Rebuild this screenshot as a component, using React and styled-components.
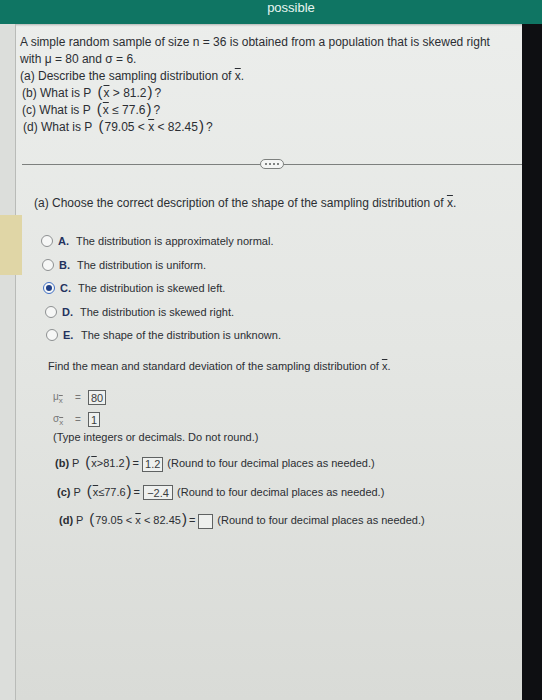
import React from "react";
import styled, { createGlobalStyle } from "styled-components";

const GlobalStyle = createGlobalStyle`
  html, body {
    margin: 0;
    padding: 0;
    background: #e2e4e1;
  }
  body {
    font-family: "Liberation Sans", Arial, sans-serif;
    color: #2b2e33;
  }
`;

const Screen = styled.div`
  width: 542px;
  height: 700px;
  display: flex;
  flex-direction: column;
  overflow: hidden;
  background: linear-gradient(180deg, #eceeec 0%, #e4e6e3 50%, #d9dbd7 100%);
`;

const Header = styled.div`
  height: 24px;
  flex-shrink: 0;
  background: #0f7563;
  display: flex;
  justify-content: center;
  overflow: hidden;
  box-shadow: 0 1px 2px rgba(0, 0, 0, 0.25);
`;

const HeaderText = styled.span`
  color: #e9f5f1;
  font-size: 13px;
  line-height: 16px;
  margin-left: 40px;
`;

const Body = styled.div`
  flex: 1;
  display: flex;
`;

const Rail = styled.div`
  width: 15px;
  flex-shrink: 0;
  border-right: 1px solid #b9bbb8;
  background: #dcdedb;
  padding-top: 191px;
`;

const Marker = styled.div`
  width: 22px;
  height: 60px;
  background: #e0d6a6;
`;

const Main = styled.div`
  flex: 1;
  padding: 10px 0 0 4px;
`;

const RightEdge = styled.div`
  width: 20px;
  flex-shrink: 0;
  background: #0e0f12;
`;

const Intro = styled.div`
  font-size: 12px;
  line-height: 17px;
  padding-right: 12px;
`;

const Part = styled.div`
  padding-left: ${(p) => p.$indent || 0}px;
`;

const Bar = styled.span`
  text-decoration: overline;
`;

const Paren = styled.span`
  font-size: 15px;
  line-height: 12px;
  margin: ${(p) => (p.$left ? "0 1px 0 3px" : "0 2px 0 1px")};
`;

const DividerRow = styled.div`
  display: flex;
  align-items: center;
  margin: 23px 0 0 2px;
`;

const Rule = styled.div`
  flex: 1;
  height: 1px;
  background: #7d807e;
`;

const Pill = styled.div`
  width: 22px;
  height: 8px;
  border: 1px solid #7d807e;
  border-radius: 5px;
  background: #f4f5f4;
  display: flex;
  align-items: center;
  justify-content: center;
  gap: 2px;
`;

const Dot = styled.span`
  width: 2px;
  height: 2px;
  border-radius: 50%;
  background: #5a5d5c;
`;

const Question = styled.div`
  font-size: 12px;
  line-height: 16px;
  margin: 26px 0 0 14px;
`;

const Options = styled.div`
  display: flex;
  flex-direction: column;
  gap: 7.5px;
  margin: 22px 0 0 21px;
`;

const Option = styled.div`
  display: flex;
  align-items: center;
  font-size: 11px;
  line-height: 16px;
  padding-left: ${(p) => p.$shift}px;
`;

const Radio = styled.span`
  width: 10px;
  height: 10px;
  border-radius: 50%;
  border: 1.5px solid ${(p) => (p.$on ? "#3f6fc4" : "#8d9091")};
  background: #f6f7f6;
  display: flex;
  align-items: center;
  justify-content: center;
  margin-right: 5px;
  flex-shrink: 0;
`;

const RadioDot = styled.span`
  width: 6px;
  height: 6px;
  border-radius: 50%;
  background: #1f3f86;
`;

const Letter = styled.span`
  font-weight: bold;
  color: #23325e;
  width: 18px;
`;

const Find = styled.div`
  font-size: 11px;
  line-height: 16px;
  margin: 15px 0 0 28px;
`;

const Stats = styled.div`
  margin: 16px 0 0 33px;
  display: flex;
  flex-direction: column;
  gap: 7px;
`;

const StatRow = styled.div`
  display: flex;
  align-items: center;
  font-size: 10px;
  color: #555;
`;

const Sym = styled.span`
  width: 22px;
  font-size: 10px;
  color: #777;
`;

const Sub = styled.sub`
  font-size: 8px;
`;

const Eq = styled.span`
  width: 10px;
  color: #777;
`;

const Box = styled.span`
  display: inline-flex;
  align-items: center;
  justify-content: center;
  vertical-align: middle;
  min-width: ${(p) => p.$w}px;
  height: 15px;
  padding: 0 2px;
  box-sizing: border-box;
  border: 1px solid #5f6262;
  background: #eef0ee;
  font-size: 11px;
  color: #3a3d40;
  margin: 0 4px 0 3px;
`;

const Note = styled.div`
  font-size: 11px;
  line-height: 16px;
  margin: 2px 0 0 33px;
`;

const Answers = styled.div`
  display: flex;
  flex-direction: column;
  gap: 12px;
  margin: 10px 0 0 35px;
`;

const Answer = styled.div`
  font-size: 11px;
  line-height: 16px;
  white-space: nowrap;
  padding-left: ${(p) => p.$shift}px;
`;

const Tag = styled.span`
  font-weight: bold;
  margin-right: 3px;
`;

const xbar = <Bar>x</Bar>;

const options = [
  { key: "A", text: "The distribution is approximately normal.", shift: 0 },
  { key: "B", text: "The distribution is uniform.", shift: 1 },
  { key: "C", text: "The distribution is skewed left.", shift: 2, on: true },
  { key: "D", text: "The distribution is skewed right.", shift: 4 },
  { key: "E", text: "The shape of the distribution is unknown.", shift: 5 },
];

export default function App() {
  return (
    <>
      <GlobalStyle />
      <Screen>
        <Header>
          <HeaderText>possible</HeaderText>
        </Header>
        <Body>
          <Rail>
            <Marker />
          </Rail>
          <Main>
            <Intro>
              <div>
                A simple random sample of size n = 36 is obtained from a population that is skewed right
              </div>
              <div>with μ = 80 and σ = 6.</div>
              <Part>(a) Describe the sampling distribution of {xbar}.</Part>
              <Part $indent={2}>
                (b) What is P <Paren $left>(</Paren>{xbar} &gt; 81.2<Paren>)</Paren>?
              </Part>
              <Part $indent={2}>
                (c) What is P <Paren $left>(</Paren>{xbar} ≤ 77.6<Paren>)</Paren>?
              </Part>
              <Part $indent={3}>
                (d) What is P <Paren $left>(</Paren>79.05 &lt; {xbar} &lt; 82.45<Paren>)</Paren>?
              </Part>
            </Intro>

            <DividerRow>
              <Rule />
              <Pill>
                <Dot />
                <Dot />
                <Dot />
                <Dot />
              </Pill>
              <Rule />
            </DividerRow>

            <Question>
              (a) Choose the correct description of the shape of the sampling distribution of {xbar}.
            </Question>

            <Options>
              {options.map((o) => (
                <Option key={o.key} $shift={o.shift}>
                  <Radio $on={o.on}>{o.on && <RadioDot />}</Radio>
                  <Letter>{o.key}.</Letter>
                  <span>{o.text}</span>
                </Option>
              ))}
            </Options>

            <Find>Find the mean and standard deviation of the sampling distribution of {xbar}.</Find>

            <Stats>
              <StatRow>
                <Sym>
                  μ<Sub>{xbar}</Sub>
                </Sym>
                <Eq>=</Eq>
                <Box $w={16}>80</Box>
              </StatRow>
              <StatRow>
                <Sym>
                  σ<Sub>{xbar}</Sub>
                </Sym>
                <Eq>=</Eq>
                <Box $w={11}>1</Box>
              </StatRow>
            </Stats>

            <Note>(Type integers or decimals. Do not round.)</Note>

            <Answers>
              <Answer $shift={0}>
                <Tag>(b)</Tag>P <Paren $left>(</Paren>{xbar}&gt;81.2<Paren>)</Paren>=
                <Box $w={20}>1.2</Box>
                (Round to four decimal places as needed.)
              </Answer>
              <Answer $shift={2}>
                <Tag>(c)</Tag>P <Paren $left>(</Paren>{xbar}≤77.6<Paren>)</Paren>=
                <Box $w={30}>−2.4</Box>
                (Round to four decimal places as needed.)
              </Answer>
              <Answer $shift={4}>
                <Tag>(d)</Tag>P <Paren $left>(</Paren>79.05 &lt; {xbar} &lt; 82.45<Paren>)</Paren>=
                <Box $w={15} />
                (Round to four decimal places as needed.)
              </Answer>
            </Answers>
          </Main>
          <RightEdge />
        </Body>
      </Screen>
    </>
  );
}
